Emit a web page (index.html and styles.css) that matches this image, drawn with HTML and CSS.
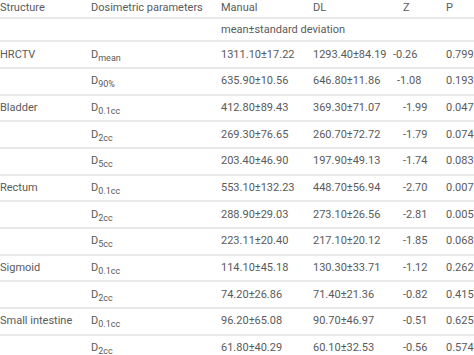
FILE: index.html
```html
<!DOCTYPE html>
<html>
<head>
<meta charset="utf-8">
<link rel="stylesheet" href="styles.css">
</head>
<body>
<div class="table">
  <div class="row head">
    <div class="c">Structure</div><div class="c">Dosimetric parameters</div><div class="c">Manual</div><div class="c">DL</div><div class="c">Z</div><div class="c">P</div>
  </div>
  <div class="row meanrow">
    <div class="c"></div><div class="c"></div><div class="c span">mean±standard deviation</div>
  </div>
  <div class="row first">
    <div class="c">HRCTV</div><div class="c">D<span class="sub">mean</span></div><div class="c">1311.10±17.22</div><div class="c">1293.40±84.19</div><div class="c z-shift">-0.26</div><div class="c">0.799</div>
  </div>
  <div class="row">
    <div class="c"></div><div class="c">D<span class="sub">90%</span></div><div class="c">635.90±10.56</div><div class="c">646.80±11.86</div><div class="c z-shift2">-1.08</div><div class="c">0.193</div>
  </div>
  <div class="row">
    <div class="c">Bladder</div><div class="c">D<span class="sub">0.1cc</span></div><div class="c">412.80±89.43</div><div class="c">369.30±71.07</div><div class="c">-1.99</div><div class="c">0.047</div>
  </div>
  <div class="row">
    <div class="c"></div><div class="c">D<span class="sub">2cc</span></div><div class="c">269.30±76.65</div><div class="c">260.70±72.72</div><div class="c">-1.79</div><div class="c">0.074</div>
  </div>
  <div class="row">
    <div class="c"></div><div class="c">D<span class="sub">5cc</span></div><div class="c">203.40±46.90</div><div class="c">197.90±49.13</div><div class="c">-1.74</div><div class="c">0.083</div>
  </div>
  <div class="row">
    <div class="c">Rectum</div><div class="c">D<span class="sub">0.1cc</span></div><div class="c">553.10±132.23</div><div class="c">448.70±56.94</div><div class="c">-2.70</div><div class="c">0.007</div>
  </div>
  <div class="row">
    <div class="c"></div><div class="c">D<span class="sub">2cc</span></div><div class="c">288.90±29.03</div><div class="c">273.10±26.56</div><div class="c">-2.81</div><div class="c">0.005</div>
  </div>
  <div class="row">
    <div class="c"></div><div class="c">D<span class="sub">5cc</span></div><div class="c">223.11±20.40</div><div class="c">217.10±20.12</div><div class="c">-1.85</div><div class="c">0.068</div>
  </div>
  <div class="row">
    <div class="c">Sigmoid</div><div class="c">D<span class="sub">0.1cc</span></div><div class="c">114.10±45.18</div><div class="c">130.30±33.71</div><div class="c">-1.12</div><div class="c">0.262</div>
  </div>
  <div class="row">
    <div class="c"></div><div class="c">D<span class="sub">2cc</span></div><div class="c">74.20±26.86</div><div class="c">71.40±21.36</div><div class="c">-0.82</div><div class="c">0.415</div>
  </div>
  <div class="row">
    <div class="c">Small intestine</div><div class="c">D<span class="sub">0.1cc</span></div><div class="c">96.20±65.08</div><div class="c">90.70±46.97</div><div class="c">-0.51</div><div class="c">0.625</div>
  </div>
  <div class="row">
    <div class="c"></div><div class="c">D<span class="sub">2cc</span></div><div class="c">61.80±40.29</div><div class="c">60.10±32.53</div><div class="c">-0.56</div><div class="c">0.574</div>
  </div>
</div>
</body>
</html>
```
FILE: styles.css
```css
html, body {
  margin: 0;
  padding: 0;
  background: #ffffff;
  overflow: hidden;
}
body {
  width: 474px;
  height: 355px;
}
.table {
  width: 474px;
  overflow: hidden;
  font-family: Roboto, "Liberation Sans", sans-serif;
  font-size: 11px;
  color: #5a5a5a;
}
.row {
  display: grid;
  grid-template-columns: 90px 130px 92px 90px 43px 29px;
  align-items: center;
  box-sizing: border-box;
  height: 26.67px;
  border-bottom: 2px solid #e9e9e9;
  line-height: 12px;
}
.row.head {
  height: 19px;
  padding-bottom: 2px;
}
.row.meanrow {
  height: 23px;
}
.row.first {
  height: 27px;
}
.c {
  padding-left: 1px;
  white-space: nowrap;
}
.c:first-child {
  padding-left: 0;
}
.span {
  grid-column: 3 / -1;
}
.sub {
  font-size: 9px;
  vertical-align: -3px;
  line-height: 0;
}
.z-shift {
  margin-left: -10px;
}
.z-shift2 {
  margin-left: -6px;
}
```
